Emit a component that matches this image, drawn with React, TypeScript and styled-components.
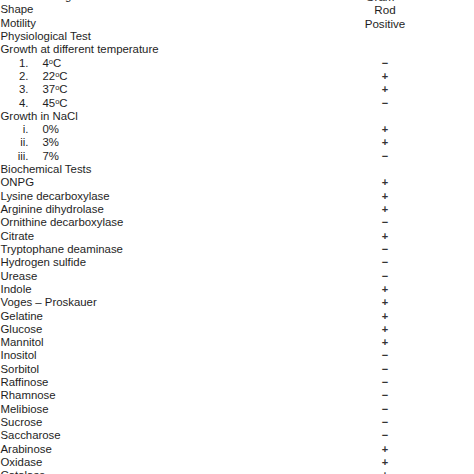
import React from 'react';
import styled, { createGlobalStyle } from 'styled-components';

const Global = createGlobalStyle`
  html, body {
    margin: 0;
    padding: 0;
    background: #fff;
    overflow: hidden;
  }
`;

const Table = styled.div`
  margin-top: -10px;
  width: 474px;
  font-family: 'Liberation Sans', Arial, sans-serif;
  font-size: 11.4px;
  color: #1e1e1e;
`;

const Row = styled.div`
  display: grid;
  grid-template-columns: 1fr 80px 49px;
  height: 13.32px;
  line-height: 13.32px;
  white-space: nowrap;
`;

const Label = styled.div`
  display: flex;
  padding-left: 0.5px;
`;

const Num = styled.span`
  width: 28px;
  text-align: right;
  margin-right: 14px;
`;

const Deg = styled.span`
  font-size: 7.5px;
  vertical-align: 3.5px;
  line-height: 1;
`;

const Value = styled.div<{ $sign?: boolean }>`
  text-align: center;
  font-size: ${p => (p.$sign ? '11px' : '11.6px')};
  font-weight: ${p => (p.$sign ? 700 : 400)};
  color: ${p => (p.$sign ? '#333' : '#1e1e1e')};
`;

type Item = { label: string; value?: string; num?: string; deg?: boolean };

const rows: Item[] = [
  { label: 'Gram staining', value: 'Gram +' },
  { label: 'Shape', value: 'Rod' },
  { label: 'Motility', value: 'Positive' },
  { label: 'Physiological Test' },
  { label: 'Growth at different temperature' },
  { num: '1.', label: '4', deg: true, value: '−' },
  { num: '2.', label: '22', deg: true, value: '+' },
  { num: '3.', label: '37', deg: true, value: '+' },
  { num: '4.', label: '45', deg: true, value: '−' },
  { label: 'Growth in NaCl' },
  { num: 'i.', label: '0%', value: '+' },
  { num: 'ii.', label: '3%', value: '+' },
  { num: 'iii.', label: '7%', value: '−' },
  { label: 'Biochemical Tests' },
  { label: 'ONPG', value: '+' },
  { label: 'Lysine decarboxylase', value: '+' },
  { label: 'Arginine dihydrolase', value: '+' },
  { label: 'Ornithine decarboxylase', value: '−' },
  { label: 'Citrate', value: '+' },
  { label: 'Tryptophane deaminase', value: '−' },
  { label: 'Hydrogen sulfide', value: '−' },
  { label: 'Urease', value: '−' },
  { label: 'Indole', value: '+' },
  { label: 'Voges – Proskauer', value: '+' },
  { label: 'Gelatine', value: '+' },
  { label: 'Glucose', value: '+' },
  { label: 'Mannitol', value: '+' },
  { label: 'Inositol', value: '−' },
  { label: 'Sorbitol', value: '−' },
  { label: 'Raffinose', value: '−' },
  { label: 'Rhamnose', value: '−' },
  { label: 'Melibiose', value: '−' },
  { label: 'Sucrose', value: '−' },
  { label: 'Saccharose', value: '−' },
  { label: 'Arabinose', value: '+' },
  { label: 'Oxidase', value: '+' },
  { label: 'Catalase', value: '+' },
];

const App: React.FC = () => (
  <>
    <Global />
    <Table>
      {rows.map((r, i) => (
        <Row key={i}>
          <Label>
            {r.num && <Num>{r.num}</Num>}
            <span>
              {r.label}
              {r.deg && (
                <>
                  <Deg>o</Deg>C
                </>
              )}
            </span>
          </Label>
          <Value $sign={r.value === '+' || r.value === '−'}>{r.value}</Value>
          <div />
        </Row>
      ))}
    </Table>
  </>
);

export default App;
